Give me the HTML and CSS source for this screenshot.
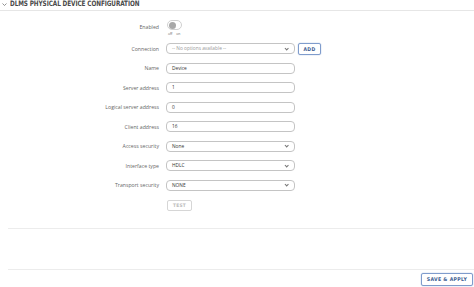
FILE: index.html
```html
<!DOCTYPE html>
<html lang="en">
<head>
<meta charset="UTF-8">
<meta name="viewport" content="width=device-width, initial-scale=1.0">
<title>DLMS Physical Device Configuration</title>
<link rel="stylesheet" href="styles.css">
</head>
<body>

<div class="section-title">
  <svg class="chevron" width="5" height="3" viewBox="0 0 5 3"><path d="M0.5 0.5 L2.5 2.5 L4.5 0.5" fill="none" stroke="#666" stroke-width="0.7"/></svg>
  <span>DLMS PHYSICAL DEVICE CONFIGURATION</span>
</div>

<div class="form">
  <div class="row row-toggle">
    <label>Enabled</label>
    <div class="toggle-wrap">
      <div class="toggle"><div class="knob"></div></div>
      <div class="toggle-labels"><span>off</span><span>on</span></div>
    </div>
  </div>
  <div class="row">
    <label>Connection</label>
    <div class="field select placeholder">-- No options available --</div>
    <button class="btn btn-blue btn-add">ADD</button>
  </div>
  <div class="row">
    <label>Name</label>
    <div class="field">Device</div>
  </div>
  <div class="row">
    <label>Server address</label>
    <div class="field">1</div>
  </div>
  <div class="row">
    <label>Logical server address</label>
    <div class="field">0</div>
  </div>
  <div class="row">
    <label>Client address</label>
    <div class="field">16</div>
  </div>
  <div class="row">
    <label>Access security</label>
    <div class="field select">None</div>
  </div>
  <div class="row">
    <label>Interface type</label>
    <div class="field select">HDLC</div>
  </div>
  <div class="row">
    <label>Transport security</label>
    <div class="field select">NONE</div>
  </div>
  <div class="row">
    <label></label>
    <button class="btn btn-test">TEST</button>
  </div>
</div>

<div class="divider first"></div>
<div class="divider second"></div>

<div class="footer">
  <button class="btn btn-blue btn-save">SAVE &amp; APPLY</button>
</div>

</body>
</html>
```

FILE: styles.css
```css
body {
  margin: 0;
  font-family: "Open Sans", "Liberation Sans", sans-serif;
  color: #555;
  background: #fff;
  width: 474px;
  height: 287px;
  overflow: hidden;
}

.section-title {
  height: 10px;
  border-bottom: 1px solid #e6e6e6;
  display: flex;
  align-items: flex-start;
  padding-left: 2px;
}
.chevron {
  margin-top: 3px;
  margin-right: 3px;
}
.section-title span {
  font-family: "DejaVu Sans Condensed", "DejaVu Sans", sans-serif;
  font-weight: bold;
  font-size: 7.4px;
  line-height: 8px;
  color: #4a4a4a;
  letter-spacing: -0.1px;
  transform: scaleX(0.86);
  transform-origin: left;
  margin-top: -0.5px;
}

.form {
  padding-top: 9px;
}
.row {
  height: 19.5px;
  display: flex;
  align-items: center;
}
.row label {
  width: 166px;
  padding-right: 7px;
  box-sizing: border-box;
  text-align: right;
  font-size: 5.2px;
  color: #666;
}
.row-toggle {
  height: 19px;
  align-items: flex-start;
}
.row-toggle label {
  margin-top: 3px;
}
.toggle-wrap {
  margin-left: 1px;
}
.toggle {
  width: 15px;
  height: 10px;
  box-sizing: border-box;
  border: 1px solid #d0d0d0;
  border-radius: 5px;
  display: flex;
  align-items: center;
  padding-left: 1px;
}
.knob {
  width: 7px;
  height: 7px;
  border-radius: 50%;
  background: #a8a8a8;
}
.toggle-labels {
  display: flex;
  gap: 4px;
  font-size: 3.4px;
  color: #666;
  margin-top: 1px;
  padding-left: 1px;
}

.field {
  width: 129px;
  height: 11px;
  box-sizing: border-box;
  border: 1px solid #c4c4c4;
  border-radius: 4px;
  padding-left: 5px;
  font-size: 4.8px;
  line-height: 9px;
  color: #333;
  position: relative;
}
.select::after {
  content: "";
  position: absolute;
  right: 6px;
  top: 2.3px;
  width: 2.4px;
  height: 2.4px;
  border-right: 0.7px solid #777;
  border-bottom: 0.7px solid #777;
  transform: rotate(45deg);
}
.placeholder {
  color: #999;
}

.btn {
  font-family: "DejaVu Sans Condensed", "DejaVu Sans", sans-serif;
  font-weight: bold;
  background: #fff;
  border-radius: 2px;
  padding: 0;
  box-sizing: border-box;
  letter-spacing: 0.3px;
}
.btn-blue {
  border: 1px solid #7f9ccc;
  color: #3e5e92;
  box-shadow: 0 0 0 0.5px #dfe7f3;
}
.btn-add {
  width: 23px;
  height: 12px;
  margin-left: 3px;
  font-size: 5px;
}
.btn-test {
  margin-left: 1px;
  margin-top: 1px;
  width: 25px;
  height: 11px;
  border: 1px solid #d6d6d6;
  color: #bcbcbc;
  font-size: 4.8px;
}

.divider {
  height: 1px;
  background: #ececec;
  margin-left: 8px;
}
.divider.first {
  margin-top: 13px;
}
.divider.second {
  margin-top: 40px;
}

.footer {
  display: flex;
  justify-content: flex-end;
  padding-top: 3px;
  padding-right: 1px;
}
.btn-save {
  width: 52px;
  height: 13px;
  font-size: 5.2px;
}
```
